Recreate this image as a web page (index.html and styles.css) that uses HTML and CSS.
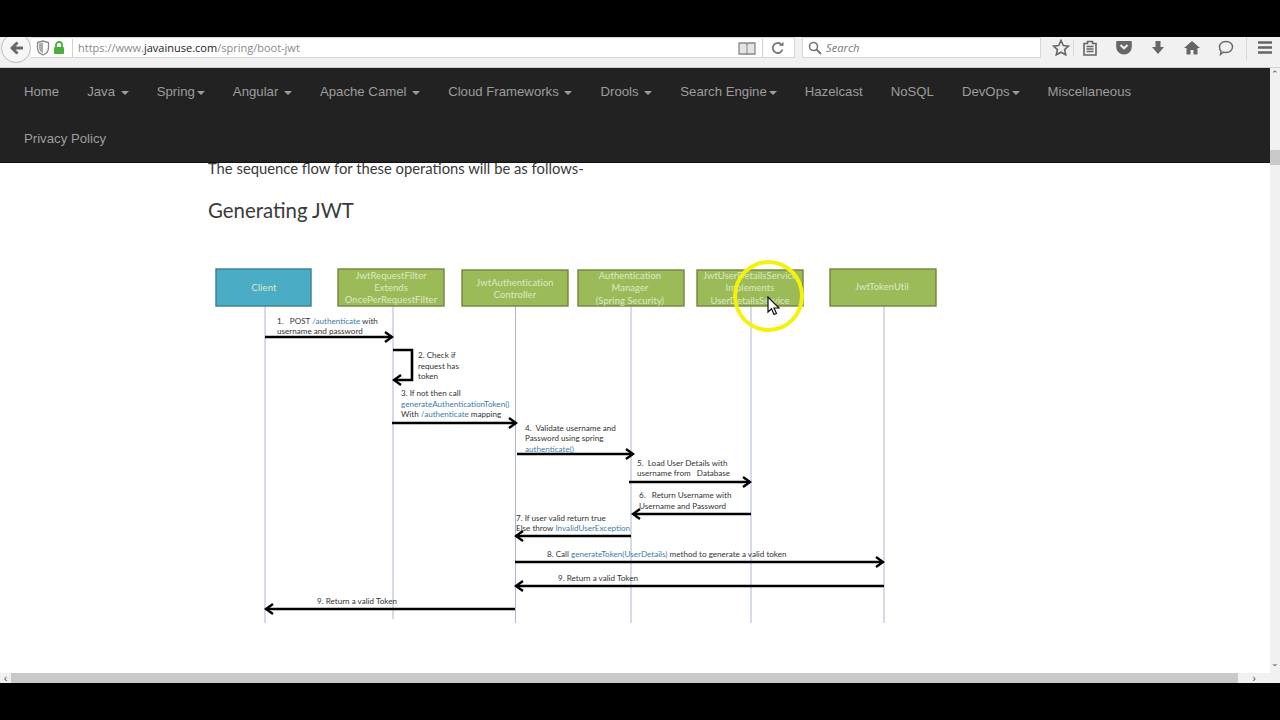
FILE: index.html
```html
<!DOCTYPE html>
<html lang="en">
<head>
  <meta charset="UTF-8" />
  <title>Spring Boot JWT</title>
  <link rel="stylesheet" href="styles.css">
</head>
<body>
  <div class="black-bar"></div>

  <div class="toolbar">
    <div class="back-btn">
      <svg width="18" height="18" viewBox="0 0 18 18"><path d="M9.500 2.500 3 9l6.500 6.500 2-2L8.500 10.500H16v-3H8.500l3-3z" fill="#666"/></svg>
    </div>
    <div class="url-box">
      <svg class="shield" width="14" height="16" viewBox="0 0 14 16"><path d="M7 1 1.500 2.500v5C1.500 11 4 14 7 15c3-1 5.500-4 5.500-7.500v-5z" fill="#fff" stroke="#888" stroke-width="1.300"/><path d="M7 2.500v11C5 12.500 3 10.500 3 7.500v-4z" fill="#aaa"/></svg>
      <svg class="lock" width="12" height="13" viewBox="0 0 12 13"><path d="M3 6V4a3 3 0 0 1 6 0v2" fill="none" stroke="#4caf3c" stroke-width="1.800"/><rect x="1" y="6" width="10" height="7" rx="1" fill="#4caf3c"/></svg>
      <span class="url-sep"></span>
      <span class="url">https://www.<b>javainuse.com</b>/spring/boot-jwt</span>
      <svg class="reader" width="18" height="14" viewBox="0 0 18 14"><path d="M1 2h7l1 1 1-1h7v11h-7l-1 .8-1-.8H1z" fill="#e4e4e4" stroke="#888" stroke-width="1.300"/><path d="M9 3v10" stroke="#888"/></svg>
      <span class="url-sep url-sep-end"></span>
      <svg class="reload" width="14" height="14" viewBox="0 0 14 14"><path d="M11.500 8.500A5 5 0 1 1 10 3.200" fill="none" stroke="#777" stroke-width="1.800"/><path d="M8 4.800 12.500 5V.8z" fill="#777"/></svg>
    </div>
    <div class="search-box">
      <svg width="14" height="14" viewBox="0 0 14 14"><circle cx="5.500" cy="5.500" r="4" fill="none" stroke="#777" stroke-width="1.600"/><path d="m8.500 8.500 4.500 4.500" stroke="#777" stroke-width="2"/></svg>
      <span>Search</span>
    </div>
    <div class="tool-icons">
      <svg width="18" height="17" viewBox="0 0 18 17"><path d="m9 1.500 2.300 5 5.200.6-3.900 3.500 1.100 5.200L9 13.200l-4.700 2.600 1.100-5.200L1.500 7.100l5.200-.6z" fill="none" stroke="#666" stroke-width="1.600"/></svg>
      <span class="tool-sep"></span>
      <svg width="14" height="16" viewBox="0 0 14 16"><path d="M1 3.500h3.500V1.500h5v2H13V15H1z" fill="none" stroke="#666" stroke-width="1.600"/><path d="M3.500 6.500h7M3.500 9h7M3.500 11.500h7" stroke="#666" stroke-width="1.500"/></svg>
      <svg class="gap-pocket" width="16" height="15" viewBox="0 0 16 15"><path d="M1 1h14a.8.800 0 0 1 .8.800V7A7.800 7.500 0 0 1 .2 7V1.800A.8.800 0 0 1 1 1z" fill="#666"/><path d="m4.500 5 3.500 3.300L11.500 5" fill="none" stroke="#f1f1f1" stroke-width="2"/></svg>
      <svg class="gap-down" width="14" height="15" viewBox="0 0 14 15"><path d="M4.500 1h5v6H13l-6 7-6-7h3.500z" fill="#666"/></svg>
      <svg class="gap-home" width="16" height="15" viewBox="0 0 16 15"><path d="M8 1 0 8h2.500v6.500H6.500V10h3v4.500h4V8H16z" fill="#666"/></svg>
      <svg class="gap-chat" width="16" height="16" viewBox="0 0 16 16"><path d="M8 1.500c3.800 0 6.500 2.400 6.500 5.500S11.800 12.500 8 12.500c-1 0-2 0-2.800-.4L2.500 14.500l.6-3.500C2 10 1.500 8.500 1.500 7 1.500 3.900 4.200 1.500 8 1.500z" fill="none" stroke="#666" stroke-width="1.400"/></svg>
      <span class="tool-sep tool-sep-end"></span>
      <svg width="16" height="13" viewBox="0 0 16 13"><path d="M1 1.500h14M1 6.500h14M1 11.500h14" stroke="#666" stroke-width="2.600"/></svg>
    </div>
  </div>

  <div class="window">
    <div class="page">
      <nav class="navbar">
        <a href="#" class="nav-link">Home</a>
        <a href="#" class="nav-link">Java <i class="caret"></i></a>
        <a href="#" class="nav-link">Spring<i class="caret"></i></a>
        <a href="#" class="nav-link">Angular <i class="caret"></i></a>
        <a href="#" class="nav-link">Apache Camel <i class="caret"></i></a>
        <a href="#" class="nav-link">Cloud Frameworks <i class="caret"></i></a>
        <a href="#" class="nav-link">Drools <i class="caret"></i></a>
        <a href="#" class="nav-link">Search Engine<i class="caret"></i></a>
        <a href="#" class="nav-link">Hazelcast</a>
        <a href="#" class="nav-link">NoSQL</a>
        <a href="#" class="nav-link">DevOps<i class="caret"></i></a>
        <a href="#" class="nav-link">Miscellaneous</a>
        <a href="#" class="nav-link">Privacy Policy</a>
      </nav>

      <div class="content">
        <p class="lead">The sequence flow for these operations will be as follows-</p>
        <h3>Generating JWT</h3>

        <div class="diagram">
          <svg class="flow" width="740" height="370" viewBox="208 260 740 370">
            <defs>
              <marker id="head" markerWidth="11" markerHeight="12" refX="9" refY="6" orient="auto-start-reverse" markerUnits="userSpaceOnUse">
                <path d="M2 1 9 6 2 11" fill="none" stroke="#000" stroke-width="2.400"/>
              </marker>
            </defs>

            <g class="life">
              <path d="M265 306V623M393 306V619M515.500 306V623M631 306V623M751 306V623M884 306V623"/>
            </g>

            <rect class="box blue" x="216" y="269" width="95" height="37"/>
            <rect class="box green" x="338" y="269" width="106" height="37"/>
            <rect class="box green" x="462" y="270" width="106" height="36"/>
            <rect class="box green" x="578" y="270" width="106" height="36"/>
            <rect class="box green" x="697" y="270" width="106" height="36"/>
            <rect class="box green" x="830" y="269" width="106" height="37"/>

            <g class="box-label">
              <text x="264" y="291">Client</text>
              <text x="391" y="279">JwtRequestFilter</text>
              <text x="391" y="291">Extends</text>
              <text x="391" y="303">OncePerRequestFilter</text>
              <text x="515" y="286">JwtAuthentication</text>
              <text x="515" y="298">Controller</text>
              <text x="630" y="279">Authentication</text>
              <text x="630" y="291">Manager</text>
              <text x="630" y="304">(Spring Security)</text>
              <text x="750" y="279">JwtUserDetailsService</text>
              <text x="750" y="291">Implements</text>
              <text x="750" y="304">UserDetailsService</text>
              <text x="882" y="290">JwtTokenUtil</text>
            </g>

            <g class="arrows">
              <path d="M265 337H392"/>
              <path d="M393 350H412V380H394"/>
              <path d="M392 423H516"/>
              <path d="M517 454H633"/>
              <path d="M629 482H750"/>
              <path d="M751 514H633"/>
              <path d="M631 536H516"/>
              <path d="M515 562H883"/>
              <path d="M884 586H516"/>
              <path d="M515 609H266"/>
            </g>

            <g class="note">
              <text x="277" y="324">1.   POST <tspan class="code">/authenticate</tspan> with</text>
              <text x="277" y="334">username and password</text>
              <text x="418" y="358">2. Check if</text>
              <text x="418" y="369">request has</text>
              <text x="418" y="379">token</text>
              <text x="401" y="396">3. If not then call</text>
              <text x="401" y="407" class="code">generateAuthenticationToken()</text>
              <text x="401" y="417">With <tspan class="code">/authenticate</tspan> mapping</text>
              <text x="525" y="431">4.  Validate username and</text>
              <text x="525" y="441">Password using spring</text>
              <text x="525" y="452" class="code">authenticate()</text>
              <text x="637" y="466">5.  Load User Details with</text>
              <text x="637" y="476">username from   Database</text>
              <text x="639" y="498">6.   Return Username with</text>
              <text x="639" y="509">Username and Password</text>
              <text x="516" y="521">7. If user valid return true</text>
              <text x="516" y="531">Else throw <tspan class="code">InvalidUserException</tspan></text>
              <text x="547" y="557">8. Call <tspan class="code">generateToken(UserDetails)</tspan> method to generate a valid token</text>
              <text x="558" y="581">9. Return a valid Token</text>
              <text x="317" y="604">9. Return a valid Token</text>
            </g>
          </svg>
        </div>
      </div>

      <div class="hscroll">
        <span class="chev">&#x2039;</span>
        <div class="hthumb"></div>
        <span class="chev">&#x203A;</span>
      </div>
    </div>

    <div class="vscroll">
      <span class="vchev">&#x2303;</span>
      <div class="vthumb"></div>
      <div class="vspace"></div>
      <span class="vchev vchev-down">&#x2304;</span>
    </div>

    <!-- cursor highlight from the screen recorder -->
    <div class="cursor-ring"></div>
    <svg class="cursor" width="14" height="20" viewBox="0 0 14 20"><path d="M1 1v15l3.500-3.300L7 18.500l2.500-1-2.500-5.500h5z" fill="#fff" stroke="#111" stroke-width="1.200"/></svg>
  </div>

  <div class="black-bar-bottom"></div>
</body>
</html>
```

FILE: styles.css
```css
html, body {
  height: 100%;
}
body {
  font-family: "Liberation Sans", Arial, sans-serif;
  background-color: #000;
  margin: 0;
  display: flex;
  flex-direction: column;
  overflow: hidden;
}
.black-bar {
  height: 37px;
  flex: none;
}
.black-bar-bottom {
  height: 37px;
  flex: none;
}

/* browser toolbar */
.toolbar {
  height: 31px;
  flex: none;
  box-sizing: border-box;
  background-color: #f1f1f1;
  border-bottom: 1px solid #cfcfcf;
  display: flex;
  align-items: center;
  padding: 0 0 9px 1px;
  overflow: hidden;
}
.back-btn {
  width: 30px;
  height: 30px;
  flex: none;
  box-sizing: border-box;
  border: 1px solid #bbb;
  border-radius: 50%;
  background-color: #f6f6f6;
  display: flex;
  align-items: center;
  justify-content: center;
}
.url-box {
  width: 764px;
  height: 21px;
  flex: none;
  box-sizing: border-box;
  background-color: #fff;
  border: 1px solid #d6d6d6;
  border-left: none;
  display: flex;
  align-items: center;
  padding-left: 5px;
}
.shield {
  flex: none;
}
.lock {
  flex: none;
  margin-left: 3px;
}
.url-sep {
  width: 1px;
  height: 18px;
  background-color: #d0d0d0;
  margin-left: 7px;
  flex: none;
}
.url-sep-end {
  margin-left: 0;
}
.url {
  font-family: "Open Sans", sans-serif;
  font-size: 11px;
  color: #8a8a8a;
  margin-left: 5px;
  flex: 1;
}
.url b {
  color: #222;
  font-weight: 400;
}
.reader {
  flex: none;
  margin-right: 6px;
}
.reload {
  flex: none;
  margin-left: 8px;
  margin-right: 9px;
}
.search-box {
  width: 239px;
  height: 21px;
  flex: none;
  box-sizing: border-box;
  margin-left: 7px;
  background-color: #fff;
  border: 1px solid #d6d6d6;
  display: flex;
  align-items: center;
  gap: 4px;
  padding-left: 5px;
  font-family: "Open Sans", sans-serif;
  font-size: 11.200px;
  font-style: italic;
  color: #777;
}
.tool-icons {
  flex: 1;
  display: flex;
  align-items: center;
  margin-left: 11px;
}
.tool-sep {
  width: 1px;
  height: 16px;
  background-color: #d8d8d8;
  margin: 0 9px 0 3px;
}
.tool-sep-end {
  height: 24px;
  margin: 0 10px 0 12px;
}
.gap-pocket {
  margin-left: 19px;
}
.gap-down {
  margin-left: 19px;
}
.gap-home {
  margin-left: 19px;
}
.gap-chat {
  margin-left: 18px;
}

/* page window */
.window {
  flex: 1;
  display: flex;
  position: relative;
  background-color: #fff;
  overflow: hidden;
}
.page {
  flex: 1;
  min-width: 0;
  display: flex;
  flex-direction: column;
}
.navbar {
  height: 95px;
  flex: none;
  box-sizing: border-box;
  background-color: #222;
  border-bottom: 1px solid #111;
  padding: 0 40px 0 10px;
  display: flex;
  flex-wrap: wrap;
  align-content: flex-start;
}
.nav-link {
  font-size: 13.200px;
  line-height: 47px;
  color: #9d9d9d;
  text-decoration: none;
  padding: 0 14px;
  white-space: nowrap;
}
.caret {
  display: inline-block;
  width: 0;
  height: 0;
  vertical-align: middle;
  margin-left: 2px;
  border-top: 4px solid #9d9d9d;
  border-left: 4px solid transparent;
  border-right: 4px solid transparent;
}
.content {
  flex: 1;
  padding-left: 208px;
  min-height: 0;
}
.lead {
  margin: 0;
  font-family: "Lato", sans-serif;
  font-size: 14.800px;
  line-height: 10px;
  color: #3a3a3a;
}
h3 {
  margin: 26px 0 0 0;
  font-family: "Lato", sans-serif;
  font-size: 20.400px;
  font-weight: 400;
  line-height: 22px;
  color: #3a3a3a;
}
.diagram {
  margin-top: 39px;
}
.flow {
  display: block;
}
.life path {
  fill: none;
  stroke: #a9b8cf;
  stroke-width: 1;
}
.box {
  stroke-width: 1.400;
}
.box.blue {
  fill: #4bacc6;
  stroke: #3a7f95;
}
.box.green {
  fill: #9bbb59;
  stroke: #71853c;
}
.box-label text {
  font-family: "Lato", sans-serif;
  font-size: 9.400px;
  letter-spacing: 0.100px;
  fill: #dfe9c6;
  text-anchor: middle;
}
.arrows path {
  fill: none;
  stroke: #000;
  stroke-width: 2.600;
  marker-end: url(#head);
}
.note text {
  font-family: "Lato", sans-serif;
  font-size: 8.100px;
  fill: #333;
  white-space: pre;
}
.note .code {
  fill: #3d7da6;
}

/* scrollbars */
.hscroll {
  height: 10px;
  flex: none;
  background-color: #f1f1f1;
  display: flex;
  align-items: center;
}
.hthumb {
  flex: 1;
  height: 10px;
  background-color: #c9c9c9;
}
.chev {
  width: 11px;
  text-align: center;
  font-size: 11px;
  line-height: 10px;
  color: #505050;
}
.chev:last-child {
  width: 32px;
}
.vscroll {
  width: 10px;
  flex: none;
  background-color: #f1f1f1;
  display: flex;
  flex-direction: column;
  align-items: center;
}
.vchev {
  height: 12px;
  font-size: 9px;
  line-height: 12px;
  color: #505050;
}
.vthumb {
  width: 100%;
  height: 15px;
  margin-top: 70px;
  background-color: #c9c9c9;
}
.vspace {
  flex: 1;
}
.vchev-down {
  margin-bottom: 14px;
}
.cursor-ring {
  position: absolute;
  left: 733px;
  top: 192px;
  width: 71px;
  height: 72px;
  box-sizing: border-box;
  border: 4px solid #f2f20a;
  border-radius: 50%;
}
.cursor {
  position: absolute;
  left: 767px;
  top: 228px;
}
```
